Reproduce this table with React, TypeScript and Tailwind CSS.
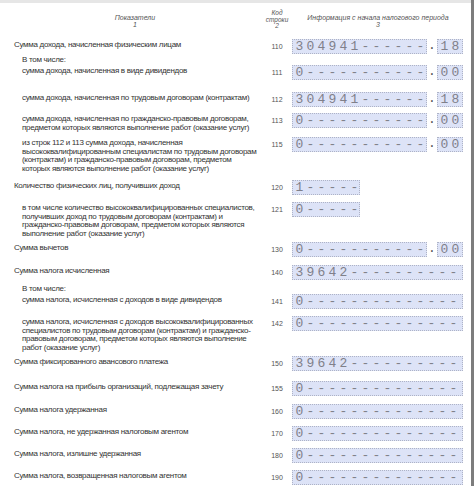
import React from "react";

type Row = {
  label: string;
  sub: boolean;
  h: string;
  code?: string;
  value?: string;
  cells?: 6 | 12 | 15;
  dec?: string;
};

const rows: Row[] = [
  { code: "110", label: "Сумма дохода, начисленная физическим лицам", sub: false, value: "304941", cells: 12, dec: "18", h: "h-[17px]" },
  { label: "В том числе:", sub: true, h: "h-[9px]" },
  { code: "111", label: "сумма дохода, начисленная в виде дивидендов", sub: true, value: "0", cells: 12, dec: "00", h: "h-[27px]" },
  { code: "112", label: "сумма дохода, начисленная по трудовым договорам (контрактам)", sub: true, value: "304941", cells: 12, dec: "18", h: "h-[21px]" },
  { code: "113", label: "сумма дохода, начисленная по гражданско-правовым договорам, предметом которых являются выполнение работ (оказание услуг)", sub: true, value: "0", cells: 12, dec: "00", h: "h-[24px]" },
  { code: "115", label: "из строк 112 и 113 сумма дохода, начисленная высококвалифицированным специалистам по трудовым договорам (контрактам) и гражданско-правовым договорам, предметом которых являются выполнение работ (оказание услуг)", sub: true, value: "0", cells: 12, dec: "00", h: "h-[43px]" },
  { code: "120", label: "Количество физических лиц, получивших доход", sub: false, value: "1", cells: 6, h: "h-[22px]" },
  { code: "121", label: "в том числе количество высококвалифицированных специалистов, получивших доход по трудовым договорам (контрактам) и гражданско-правовым договорам, предметом которых являются выполнение работ (оказание услуг)", sub: true, value: "0", cells: 6, h: "h-[40px]" },
  { code: "130", label: "Сумма вычетов", sub: false, value: "0", cells: 12, dec: "00", h: "h-[23px]" },
  { code: "140", label: "Сумма налога исчисленная", sub: false, value: "39642", cells: 15, h: "h-[20px]" },
  { label: "В том числе:", sub: true, h: "h-[9px]" },
  { code: "141", label: "сумма налога, исчисленная с доходов в виде дивидендов", sub: true, value: "0", cells: 15, h: "h-[22px]" },
  { code: "142", label: "сумма налога, исчисленная с доходов высококвалифицированных специалистов по трудовым договорам (контрактам) и гражданско-правовым договорам, предметом которых являются выполнение работ (оказание услуг)", sub: true, value: "0", cells: 15, h: "h-[40px]" },
  { code: "150", label: "Сумма фиксированного авансового платежа", sub: false, value: "39642", cells: 15, h: "h-[25px]" },
  { code: "155", label: "Сумма налога на прибыль организаций, подлежащая зачету", sub: false, value: "0", cells: 15, h: "h-[23px]" },
  { code: "160", label: "Сумма налога удержанная", sub: false, value: "0", cells: 15, h: "h-[22px]" },
  { code: "170", label: "Сумма налога, не удержанная налоговым агентом", sub: false, value: "0", cells: 15, h: "h-[22px]" },
  { code: "180", label: "Сумма налога, излишне удержанная", sub: false, value: "0", cells: 15, h: "h-[22px]" },
  { code: "190", label: "Сумма налога, возвращенная налоговым агентом", sub: false, value: "0", cells: 15, h: "h-[16px]" },
];

const boxWidth = { 2: "w-[26px]", 6: "w-[68px]", 12: "w-[135px]", 15: "w-[171px]" };

function Cells({ text, width }: { text: string; width: string }) {
  return (
    <div className={`flex h-[15px] pl-[1px] bg-[#dde3f7] border border-dotted border-[#aeb3c6] font-['Liberation_Mono',monospace] text-[13px] leading-[13px] text-[#80808a] ${width}`}>
      {text.split("").map((ch, i) => (
        <span key={i} className="w-[11px] shrink-0 text-center">{ch}</span>
      ))}
    </div>
  );
}

function Field({ row }: { row: Row }) {
  const cells = row.cells ?? 12;
  const text = row.value + "-".repeat(cells - (row.value ?? "").length);
  return (
    <div className="flex items-start">
      <Cells text={text} width={boxWidth[cells]} />
      {row.dec && (
        <>
          <div className="w-[10px] h-[15px] text-center font-['Liberation_Mono',monospace] text-[13px] leading-[13px] text-[#555]">.</div>
          <Cells text={row.dec} width={boxWidth[2]} />
        </>
      )}
    </div>
  );
}

export default function App() {
  return (
    <div className="w-[474px] h-[486px] overflow-hidden bg-white border-r-[3px] border-[#7d7d7d] font-['Liberation_Sans',Arial,sans-serif]">
      <div className="h-[3px] bg-[#e6e6e6]" />

      <div className="flex h-[36px] italic text-[#555] text-[7px]">
        <div className="w-[262px] pl-[8px] pt-[11px] text-center leading-[7px]">
          <p>Показатели</p>
          <p>1</p>
        </div>
        <div className="w-[30px] pt-[7px] text-center leading-[6.5px] text-[6.5px]">
          <p>Код</p>
          <p>строки</p>
          <p>2</p>
        </div>
        <div className="w-[172px] pt-[11px] text-center leading-[7px]">
          <p>Информация с начала налогового периода</p>
          <p>3</p>
        </div>
      </div>

      {rows.map((row, i) => (
        <div key={i} className={`flex items-start ${row.h}`}>
          <div className={`w-[262px] pr-[3px] text-[8px] tracking-[-0.3px] leading-[8.6px] text-[#333] ${row.code ? "pt-[2px]" : ""} ${row.sub ? "pl-[22px]" : "pl-[14px]"}`}>
            {row.label}
          </div>
          {row.code && (
            <>
              <div className="w-[30px] pt-[4px] text-center text-[7px] leading-[8px] text-[#555]">{row.code}</div>
              <Field row={row} />
            </>
          )}
        </div>
      ))}
    </div>
  );
}
